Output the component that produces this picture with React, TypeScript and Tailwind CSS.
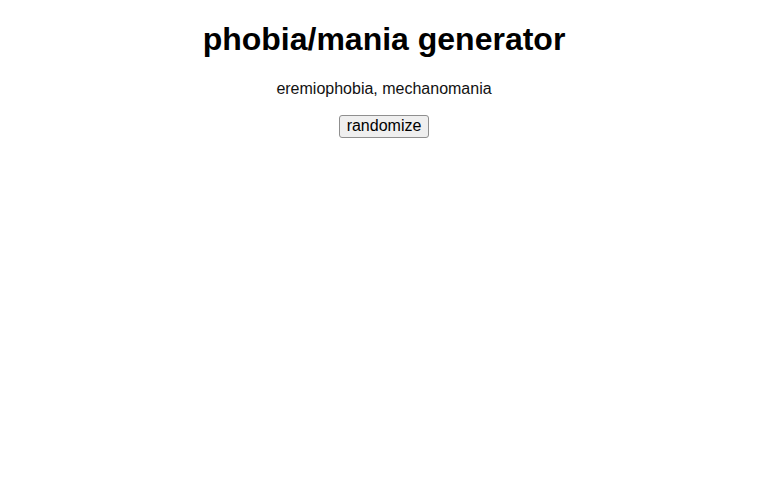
import { useState } from "react";

const phobias = ["eremiophobia", "acrophobia", "nyctophobia", "hydrophobia", "xenophobia"];
const manias = ["mechanomania", "bibliomania", "pyromania", "kleptomania", "dromomania"];

export default function App() {
  const [pair, setPair] = useState<[string, string]>(["eremiophobia", "mechanomania"]);

  const randomize = () => {
    const p = phobias[Math.floor(Math.random() * phobias.length)];
    const m = manias[Math.floor(Math.random() * manias.length)];
    setPair([p, m]);
  };

  return (
    <div className="min-h-screen bg-white text-center text-black font-['Liberation_Sans',Arial,sans-serif]">
      <h1 className="pt-[21.44px] mb-[21.44px] text-[32px] leading-[1.15] font-bold">phobia/mania generator</h1>
      <p className="mb-4 text-base leading-[1.15] text-[#111]">
        {pair[0]}, {pair[1]}
      </p>
      <div>
        <button
          onClick={randomize}
          className="px-[7px] py-[1.5px] text-base leading-[1.15] bg-[#efefef] border border-[#8f8f8f] rounded-[3px] text-black hover:bg-[#e5e5e5]"
        >
          randomize
        </button>
      </div>
    </div>
  );
}
